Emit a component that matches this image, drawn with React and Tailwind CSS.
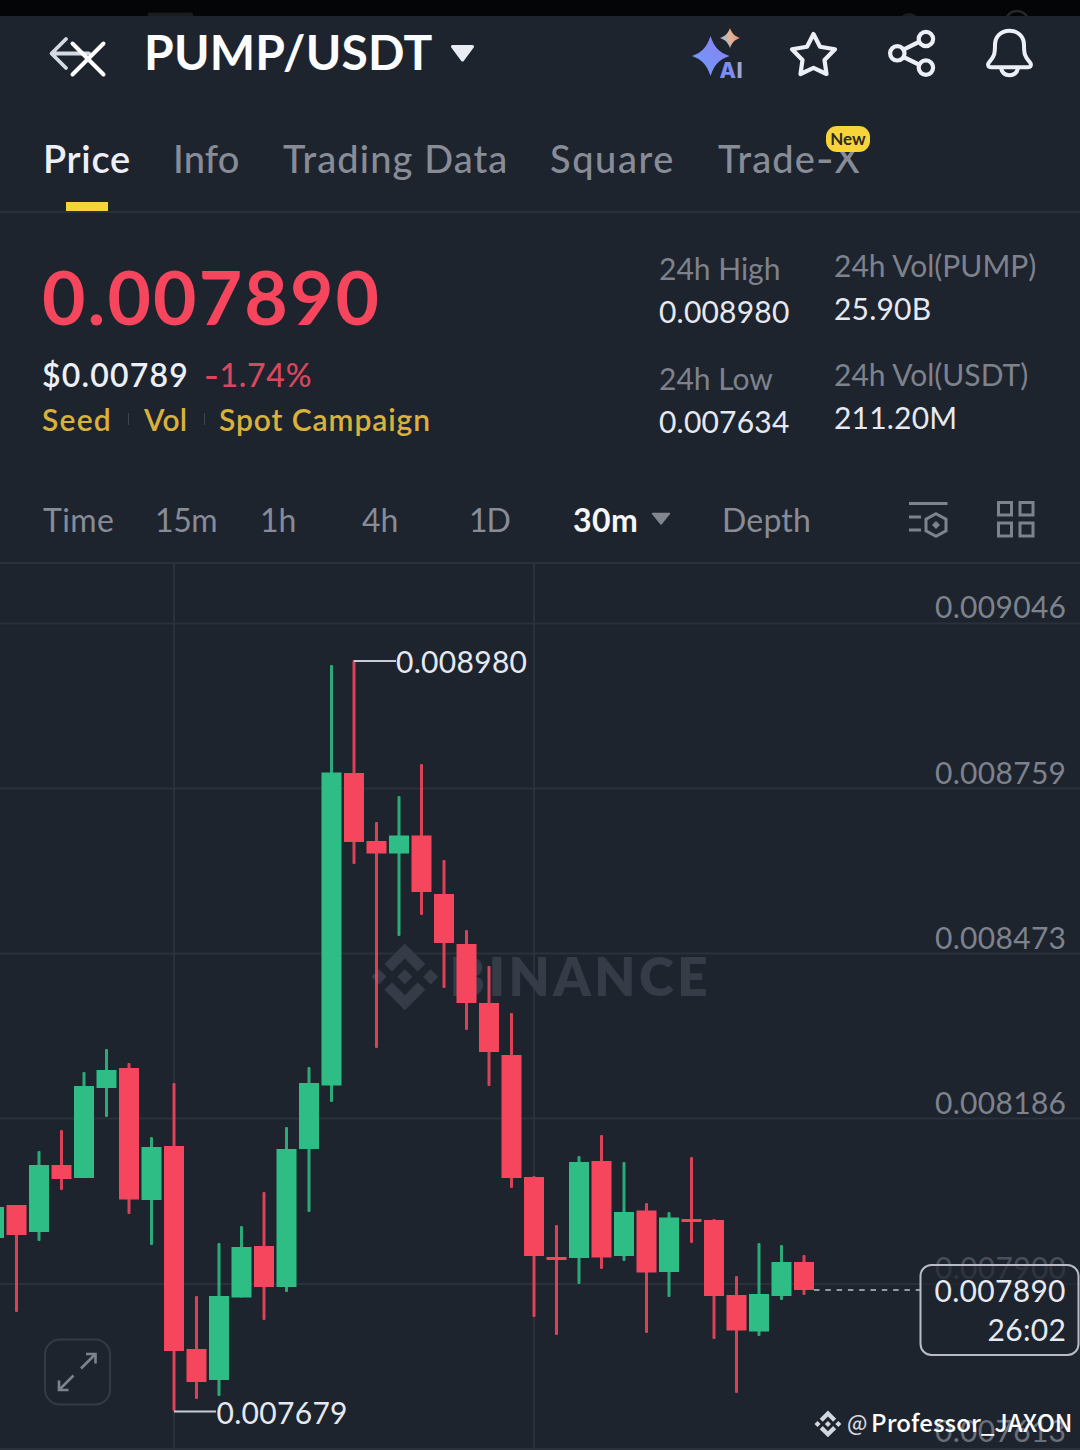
import React from "react";

const UP = "#2ebd85";
const DOWN = "#f6465d";
const BINANCE_MARK =
  "M16.624 13.9202l2.7175 2.7154-7.353 7.353-7.353-7.352 2.7175-2.7164 4.6355 4.6595 4.6356-4.6595zm4.6366-4.6366L24 12l-2.7154 2.7164L18.5682 12l2.6924-2.7164zm-9.272.001l2.7163 2.6914-2.7164 2.7174v-.001L9.2721 12l2.7164-2.7154zm-9.2722-.001L5.4088 12l-2.6914 2.6924L0 12l2.7164-2.7164zM11.9885.0115l7.353 7.329-2.7174 2.7154-4.6356-4.6356-4.6355 4.6595-2.7174-2.7154 7.353-7.353z";

// [direction, high, body top, body bottom, low] in chart coordinates
const CANDLES = [
  [0, 1205, 1205, 1235, 1312],
  [1, 1151, 1165, 1232, 1241],
  [0, 1130, 1165, 1179, 1190],
  [1, 1072, 1086, 1178, 1178],
  [1, 1049, 1070, 1088, 1117],
  [0, 1063, 1068, 1199.5, 1214],
  [1, 1137, 1147, 1200, 1245],
  [0, 1083, 1146, 1351, 1411],
  [0, 1296, 1349, 1382, 1399],
  [1, 1243, 1296, 1380, 1396],
  [1, 1226, 1247, 1297.5, 1297.5],
  [0, 1192, 1246, 1287, 1320],
  [1, 1127, 1149, 1287, 1292],
  [1, 1067, 1083, 1149, 1212],
  [1, 665, 772.5, 1085.5, 1102],
  [0, 660, 773, 842, 864],
  [0, 822, 841, 853.5, 1048],
  [1, 796, 835.5, 853.5, 936],
  [0, 764, 835.5, 892, 915],
  [0, 860, 894, 943, 988],
  [0, 930, 944, 1003, 1030],
  [0, 966, 1003, 1052, 1086],
  [0, 1013, 1055, 1178, 1188],
  [0, 1176, 1177, 1256, 1317],
  [0, 1225, 1257, 1260, 1335],
  [1, 1156, 1162, 1258, 1284],
  [0, 1135, 1161, 1257.5, 1269],
  [1, 1162, 1212, 1256, 1261],
  [0, 1203, 1210.5, 1272.5, 1333],
  [1, 1212, 1217.5, 1272, 1297],
  [0, 1157, 1219, 1222, 1243],
  [0, 1219, 1220, 1296, 1339],
  [0, 1276, 1295, 1330.5, 1393],
  [1, 1243, 1294, 1331.5, 1336],
  [1, 1245, 1262, 1296, 1300],
  [0, 1255, 1262, 1290, 1295],
];

const AXIS = [
  ["0.009046", 618],
  ["0.008759", 783.5],
  ["0.008473", 948.5],
  ["0.008186", 1113.5],
];

function BackClose() {
  return (
    <svg className="mt-[20px] ml-[46px] h-11 w-16 shrink-0" viewBox="46 36 64 44" fill="none" strokeLinecap="round" strokeLinejoin="round">
      <path d="M66 39 51.5 53.5 66 68M52 53.5h37" stroke="#d5d9e3" strokeWidth="3.8" />
      <path d="M72.5 43.5 103.5 74.5M103.5 43.5 72.5 74.5" stroke="#fff" strokeWidth="4" />
    </svg>
  );
}

function HeaderIcons() {
  return (
    <>
      <svg className="mt-[10px] ml-[214px] h-14 w-14 shrink-0" viewBox="690 26 56 56">
        <defs>
          <linearGradient id="spark" x1="1" y1="0" x2="0" y2="1">
            <stop offset="0" stopColor="#8a7ff2" />
            <stop offset="1" stopColor="#6f9df8" />
          </linearGradient>
          <linearGradient id="tiny" x1="0" y1="0.6" x2="1" y2="0.4">
            <stop offset="0.25" stopColor="#b4b6bb" />
            <stop offset="0.5" stopColor="#e3b49a" />
            <stop offset="1" stopColor="#e58a70" />
          </linearGradient>
        </defs>
        <path d="M710.5 36C714 47 719 52.500 729.500 56C719 59.500 714 65 710.500 76C707 65 702 59.500 692 56C702 52.500 707 47 710.500 36Z" fill="url(#spark)" />
        <path d="M730 28C732 33.500 734.500 36 740 38C734.500 40 732 42.500 730 48C728 42.500 725.500 40 720 38C725.500 36 728 33.500 730 28Z" fill="url(#tiny)" />
        <text x="719.5" y="78" className="text-[21.5px] font-extrabold tracking-[0.5px] font-['Inter']" fill="#7d8df0">
          A<tspan fill="#a0a6cf">I</tspan>
        </text>
      </svg>
      <svg className="mt-[12px] ml-[41px] h-13 w-13 shrink-0" viewBox="787 28 52 52" fill="none" stroke="#eceff6" strokeWidth="4.2" strokeLinejoin="round">
        <path d="M813.500 34 820 46.700 835 49.300 824.500 60 826.500 74 813.500 67.800 800.500 74 802.500 60 792 49.300 807 46.700Z" />
      </svg>
      <svg className="mt-[12px] ml-[47px] h-13 w-13 shrink-0" viewBox="886 28 52 52" fill="none" stroke="#eceff6" strokeWidth="4.2">
        <circle cx="897.300" cy="53.300" r="7.200" />
        <circle cx="925.900" cy="39" r="7.200" />
        <circle cx="925.900" cy="67.600" r="7.200" />
        <path d="M903.500 49.600 919.800 41.500M903.500 57 919.800 65" />
      </svg>
      <svg className="mt-[10px] ml-[45px] h-14 w-13 shrink-0" viewBox="983 26 52 56" fill="none" stroke="#eceff6" strokeWidth="4" strokeLinejoin="round">
        <path d="M1009.500 30.800C1000.500 30.800 995 37 995 45C995 54 994 57 989.500 61.800C986.800 65 988.500 67.200 991 67.200H1028C1030.500 67.200 1032.200 65 1029.500 61.800C1025 57 1024 54 1024 45C1024 37 1018.500 30.800 1009.500 30.800Z" />
        <path d="M1001 68C1002 73 1005 75.200 1009.500 75.200S1017 73 1018 68" />
      </svg>
    </>
  );
}

function Stat({ label, value, className }) {
  return (
    <div className={className}>
      <div className="h-9 text-[30px] leading-9 text-[#7d828d]">{label}</div>
      <div className="mt-[7px] h-9 text-[30px] leading-9 tracking-[0.2px] text-[#e6e9f1]">{value}</div>
    </div>
  );
}

function Chart() {
  return (
    <svg className="block h-[888px] w-full" viewBox="0 562 1080 888">
      <g stroke="#2b313b" strokeWidth="2">
        <path d="M0 563H1080M0 623.500H1080M0 788.500H1080M0 953.500H1080M0 1118.500H1080M0 1284H1080M0 1449H1080M174 563V1450M534 563V1450" />
      </g>
      <g fill="#353c47">
        <path d={BINANCE_MARK} transform="translate(371.500 943.500) scale(2.780)" />
        <text x="449.500" y="996" className="text-[53px] font-extrabold tracking-[3.5px]">BINANCE</text>
      </g>
      <g className="text-[30px] tracking-[0.3px]" fill="#7d828d">
        {AXIS.map(([t, y]) => (
          <text key={t} x="935" y={y}>{t}</text>
        ))}
        <text x="935" y="1278.500" fill="#494f5a">0.007900</text>
        <text x="935" y="1441.500" fill="#6a707b">0.007613</text>
      </g>
      <rect x="0" y="1207" width="4" height="31" fill={UP} />
      {CANDLES.map(([up, hi, top, bottom, lo], i) => {
        const cx = 16.5 + i * 22.5;
        return (
          <g key={i} fill={up ? UP : DOWN}>
            <rect x={cx - 1.5} y={hi} width="3" height={lo - hi} rx="1" opacity="0.88" />
            <rect x={cx - 10} y={top} width="20" height={bottom - top} />
          </g>
        );
      })}
      <path d="M354 661H396M174 1411.500H216" stroke="#c9ccd5" strokeWidth="2" />
      <g className="text-[30px] tracking-[0.3px]" fill="#e6e9f1">
        <text x="396" y="673">0.008980</text>
        <text x="216.500" y="1423.500">0.007679</text>
      </g>
      <path d="M814 1290H920" stroke="#9499a3" strokeWidth="2" strokeDasharray="5.500 5.800" />
      <rect x="920.500" y="1265" width="158" height="90" rx="11" fill="#1e242e" fillOpacity="0.6" stroke="#b9bcc6" strokeWidth="2" />
      <g className="text-[30px] tracking-[0.3px]" fill="#e6e9f1">
        <text x="934.500" y="1302">0.007890</text>
        <text x="987.500" y="1341">26:02</text>
      </g>
      <g fill="none">
        <rect x="45" y="1339.500" width="65" height="65" rx="15" stroke="#353b46" strokeWidth="2" />
        <path d="M81 1368.500 95 1354.500M86 1354H95.500V1363.500M73.500 1375.500 59.500 1389.500M59 1380.500V1390H68.500" stroke="#7d828d" strokeWidth="2.600" />
      </g>
      <path d={BINANCE_MARK} transform="translate(814.500 1410.500) scale(1.120)" fill="#d3d6dd" />
      <g className="font-['Noto_Sans_CJK_SC',sans-serif]">
        <text x="847" y="1431" className="text-[21px] font-medium" fill="#d3d6dd">@</text>
        <text x="871" y="1432" className="text-[24px] font-medium tracking-[0.1px]" fill="#fff">Professor_JAXON</text>
      </g>
    </svg>
  );
}

export default function App() {
  return (
    <main className="flex h-[1450px] w-[1080px] flex-col overflow-hidden bg-[#1e242e] font-['Lato',sans-serif] whitespace-nowrap">
      <div className="h-4 shrink-0 bg-[#040506]">
        <svg className="block h-4 w-full" viewBox="0 0 1080 16" fill="none">
          <path d="M148 16V13.500Q148 12.500 150 12.500H190Q193 12.500 193 14V16Z" fill="#1a1c1e" />
          <circle cx="909" cy="24" r="11" fill="#1a1c1e" />
          <circle cx="1017" cy="23" r="12" stroke="#25272a" strokeWidth="2.500" />
        </svg>
      </div>

      <header className="flex h-24 shrink-0 items-start">
        <BackClose />
        <h1 className="mt-[12px] ml-[34px] w-[292px] text-[48px] leading-[48px] font-bold tracking-[0.2px] text-[#fbfcfe]">PUMP/USDT</h1>
        <svg className="mt-[27px] ml-[12px] h-5 w-7 shrink-0" viewBox="448 43 28 20">
          <path d="M452.500 46.500H472.500L462.500 60Z" fill="#e9ecf3" stroke="#e9ecf3" strokeWidth="3" strokeLinejoin="round" />
        </svg>
        <HeaderIcons />
      </header>

      <nav className="grid h-[101px] shrink-0 grid-cols-[132px_110px_267px_168px_auto] border-b-2 border-[#2b313b] pt-[26px] pl-[41px] text-[38px] leading-10 font-medium text-[#878c97]">
        <div className="flex w-[92px] flex-col items-center justify-between text-[#eceff6]">
          <span className="font-semibold tracking-[0.7px]">Price</span>
          <span className="h-[9px] w-[42px] bg-[#f8d33a]" />
        </div>
        <span className="tracking-[0.2px]">Info</span>
        <span className="tracking-[1.1px]">Trading Data</span>
        <span className="tracking-[1.6px]">Square</span>
        <span className="relative w-[142px] tracking-[1.1px]">
          Trade<span className="font-['Inter']">-</span>X
          <span className="absolute top-[-12px] right-[-10px] flex h-[26px] w-11 items-center justify-center rounded-[11px] bg-[#f8d33a] text-[17px] font-bold tracking-normal text-[#2c2a1c]">New</span>
        </span>
      </nav>

      <section className="flex h-[257px] shrink-0 pl-[42px]">
        <div className="w-[617px] pt-[46px]">
          <div className="h-[75px] text-[75px] leading-[75px] font-bold tracking-[2.1px] text-[#f6465d]">0.007890</div>
          <div className="mt-[21px] flex h-10 gap-[15px] text-[32px] leading-10 font-medium">
            <span className="font-semibold tracking-[1.2px] text-[#eceff6]">$0.00789</span>
            <span className="tracking-[0.7px] text-[#d9475f]"><span className="font-['Inter']">-</span>1.74%</span>
          </div>
          <div className="mt-[6px] flex h-9 items-center text-[30px] leading-9 font-semibold text-[#d9b13b]">
            <span className="w-[86px] tracking-[1.2px]">Seed</span>
            <i className="mr-[15px] h-3 w-px bg-[#3f4550]" />
            <span className="w-[60px] tracking-[0.2px]">Vol</span>
            <i className="mr-[14px] h-3 w-px bg-[#3f4550]" />
            <span className="tracking-[0.9px]">Spot Campaign</span>
          </div>
        </div>
        <div className="w-[175px] pt-[37px]">
          <Stat label="24h High" value="0.008980" />
          <Stat className="mt-[31px]" label="24h Low" value="0.007634" />
        </div>
        <div className="pt-[34px]">
          <Stat label="24h Vol(PUMP)" value="25.90B" />
          <Stat className="mt-[30px]" label="24h Vol(USDT)" value="211.20M" />
        </div>
      </section>

      <div className="grid h-[92px] shrink-0 grid-cols-[112px_105px_102px_107px_104px_149px_186px_88px_auto] pt-[30px] pl-[43px] text-[32px] leading-10 text-[#878c97]">
        <span className="tracking-[0.4px]">Time</span>
        <span className="tracking-[-0.4px]">15m</span>
        <span>1h</span>
        <span>4h</span>
        <span className="tracking-[-1px]">1D</span>
        <span className="flex gap-[13px] font-bold tracking-[0.4px] text-[#f4f6fa]">
          30m
          <svg className="mt-[11px] h-4 w-5" viewBox="0 0 20 16">
            <path d="M1.500 2.500H18.500L10 13Z" fill="#82868f" stroke="#82868f" strokeWidth="1.500" strokeLinejoin="round" />
          </svg>
        </span>
        <span className="tracking-[0.2px]">Depth</span>
        <svg className="-mt-px -ml-0.5 h-10 w-11" viewBox="906 499.500 44 40" fill="none" stroke="#7d828d" strokeWidth="3">
          <path d="M909 504H947.500M909 517.500H921M909 530.500H921M936 514.200 946 519.700V531.300L936 536.800 926 531.300V519.700Z" />
          <path d="M936 521.500 940 525.500 936 529.500 932 525.500Z" fill="#7d828d" stroke="none" />
        </svg>
        <svg className="-mt-px -ml-[1px] h-10 w-11" viewBox="995 499.500 44 40" fill="none" stroke="#7d828d" strokeWidth="3">
          <path d="M998.500 503H1011.500V515.500H998.500ZM1020 503H1033V515.500H1020ZM998.500 523.500H1011.500V536.500H998.500ZM1020 523.500H1033V536.500H1020Z" />
        </svg>
      </div>

      <Chart />
    </main>
  );
}
